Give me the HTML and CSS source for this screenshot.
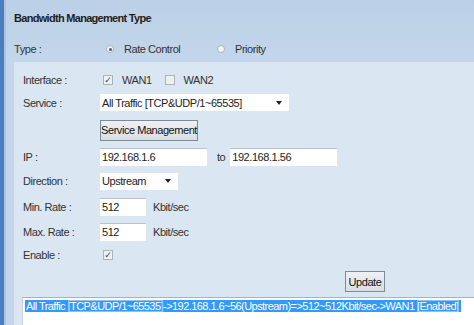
FILE: index.html
```html
<!DOCTYPE html>
<html>
<head>
<meta charset="utf-8">
<link rel="stylesheet" href="styles.css">
</head>
<body>
<div class="page">
  <div class="bar"></div>
  <div class="strip"></div>
  <div class="main">
    <div class="title">Bandwidth Management Type</div>
    <div class="typerow">
      <span class="lbl-type">Type :</span>
      <span class="radio on"></span><span class="rtext first">Rate Control</span>
      <span class="radio"></span><span class="rtext">Priority</span>
    </div>
    <div class="panel">
      <div class="row r-iface">
        <span class="lbl">Interface :</span>
        <div class="ctrl">
          <span class="cb checked">&#10003;</span><span class="cbtext">WAN1</span>
          <span class="cb"></span><span class="cbtext">WAN2</span>
        </div>
      </div>
      <div class="row r-service">
        <span class="lbl">Service :</span>
        <div class="ctrl">
          <div class="select sel-service"><span>All Traffic [TCP&amp;UDP/1~65535]</span><span class="arrow"></span></div>
        </div>
      </div>
      <div class="row r-btn">
        <span class="lbl"></span>
        <div class="ctrl"><span class="btn btn-svc">Service Management</span></div>
      </div>
      <div class="row r-ip">
        <span class="lbl">IP :</span>
        <div class="ctrl">
          <span class="input ip">192.168.1.6</span>
          <span class="to">to</span>
          <span class="input ip">192.168.1.56</span>
        </div>
      </div>
      <div class="row r-dir">
        <span class="lbl">Direction :</span>
        <div class="ctrl">
          <div class="select sel-dir"><span>Upstream</span><span class="arrow"></span></div>
        </div>
      </div>
      <div class="row r-min">
        <span class="lbl">Min. Rate :</span>
        <div class="ctrl"><span class="input rate">512</span><span class="unit">Kbit/sec</span></div>
      </div>
      <div class="row r-max">
        <span class="lbl">Max. Rate :</span>
        <div class="ctrl"><span class="input rate">512</span><span class="unit">Kbit/sec</span></div>
      </div>
      <div class="row r-en">
        <span class="lbl">Enable :</span>
        <div class="ctrl"><span class="cb checked en">&#10003;</span></div>
      </div>
      <div class="updrow"><span class="btn btn-upd">Update</span></div>
      <div class="listbox">
        <div class="item">All Traffic <span class="box">[TCP&amp;UDP/1~65535]</span>-&gt;192.168.1.6~56(Upstream)=&gt;512~512Kbit/sec-&gt;WAN1 <span class="box">[Enabled]</span></div>
      </div>
    </div>
  </div>
</div>
</body>
</html>
```

FILE: styles.css
```css
html, body {
  margin: 0;
  padding: 0;
  width: 474px;
  height: 325px;
  overflow: hidden;
  font-family: "Liberation Sans", Arial, sans-serif;
  font-size: 11px;
  letter-spacing: -0.45px;
  color: #222;
}
.page {
  display: flex;
  height: 325px;
  background: #c2d5ea;
}
.bar {
  flex: none;
  width: 4px;
  background: #4a7ebf;
}
.strip {
  flex: none;
  width: 2px;
  background: #a9c3e0;
}
.main {
  flex: 1;
  min-width: 0;
  overflow: hidden;
  display: flex;
  flex-direction: column;
  background: linear-gradient(#bbd0e7, #c3d6eb 60px);
}
.title {
  height: 36px;
  line-height: 37px;
  padding-left: 8px;
  font-weight: bold;
  letter-spacing: -0.7px;
  color: #1e1e1e;
}
.typerow {
  height: 26px;
  display: flex;
  align-items: center;
  padding-left: 8px;
  color: #333;
}
.lbl-type {
  width: 92px;
  flex: none;
}
.radio {
  flex: none;
  width: 8px;
  height: 8px;
  border-radius: 50%;
  border: 1px solid #aab4bf;
  background: #f2f4f6;
  box-sizing: border-box;
  position: relative;
  margin-right: 10px;
}
.radio.on::after {
  content: "";
  position: absolute;
  left: 1.5px;
  top: 1.5px;
  width: 3px;
  height: 3px;
  border-radius: 50%;
  background: #3a5f8a;
}
.rtext.first {
  width: 93px;
}
.panel {
  flex: 1;
  margin-left: 8px;
  background: #dae6f2;
  padding-top: 6px;
  padding-left: 9px;
  display: flex;
  flex-direction: column;
  color: #333;
}
.row {
  display: flex;
  align-items: center;
}
.lbl {
  width: 77px;
  flex: none;
}
.ctrl {
  display: flex;
  align-items: center;
}
.r-iface { height: 24px; }
.r-service { height: 21px; }
.r-btn { height: 24px; margin-top: 5px; }
.r-ip { height: 22px; margin-top: 4px; }
.r-dir { height: 18px; margin-top: 4px; }
.r-min { height: 20px; margin-top: 7px; }
.r-max { height: 19px; margin-top: 5px; }
.r-en { height: 18px; margin-top: 5px; }
.cb {
  flex: none;
  width: 10px;
  height: 10px;
  border: 1px solid #a9b3bd;
  background: #eef1f4;
  box-sizing: border-box;
  font-size: 9px;
  line-height: 8px;
  letter-spacing: 0;
  text-align: center;
  color: #3a4a5a;
  margin-left: 3px;
  margin-right: 9px;
  font-family: "DejaVu Sans", sans-serif;
}
.cbtext {
  margin-right: 10px;
}
.select {
  background: #fff;
  height: 17px;
  display: flex;
  align-items: center;
  justify-content: space-between;
  padding-left: 2px;
  padding-right: 7px;
  box-sizing: border-box;
  color: #222;
  white-space: nowrap;
}
.sel-service { width: 189px; }
.sel-dir { width: 78px; }
.arrow {
  width: 0;
  height: 0;
  border-left: 3px solid transparent;
  border-right: 3px solid transparent;
  border-top: 4px solid #222;
}
.btn {
  display: flex;
  align-items: center;
  justify-content: center;
  box-sizing: border-box;
  border: 1px solid #7d8b98;
  background: linear-gradient(#eef1f4, #d9dee4);
  color: #111;
  white-space: nowrap;
}
.btn-svc {
  width: 98px;
  height: 21px;
}
.input {
  background: #fff;
  box-sizing: border-box;
  border-top: 1px solid #b8c2cc;
  height: 18px;
  line-height: 17px;
  padding-left: 2px;
  color: #222;
}
.ip {
  width: 107px;
}
.to {
  margin: 0 5px 0 10px;
}
.rate {
  width: 46px;
}
.unit {
  margin-left: 7px;
}
.en {
  margin-left: 3px;
}
.updrow {
  display: flex;
  height: 21px;
  margin-top: 7px;
  padding-left: 322px;
}
.btn-upd {
  width: 40px;
  height: 21px;
}
.listbox {
  margin-top: 5px;
  flex: 1;
  margin-left: -1px;
  background: #fff;
  border-top: 1px solid #a6b2be;
  border-left: 1px solid #c8d2dc;
  padding: 2px 0 0 2px;
  white-space: nowrap;
  overflow: hidden;
}
.item {
  display: inline-block;
  background: #3399ff;
  color: #fff;
  height: 12px;
  line-height: 12px;
  padding-left: 1px;
  padding-right: 2px;
  letter-spacing: -0.55px;
}
.box {
  outline: 1px solid #8fc3f7;
  outline-offset: -1px;
}
```
